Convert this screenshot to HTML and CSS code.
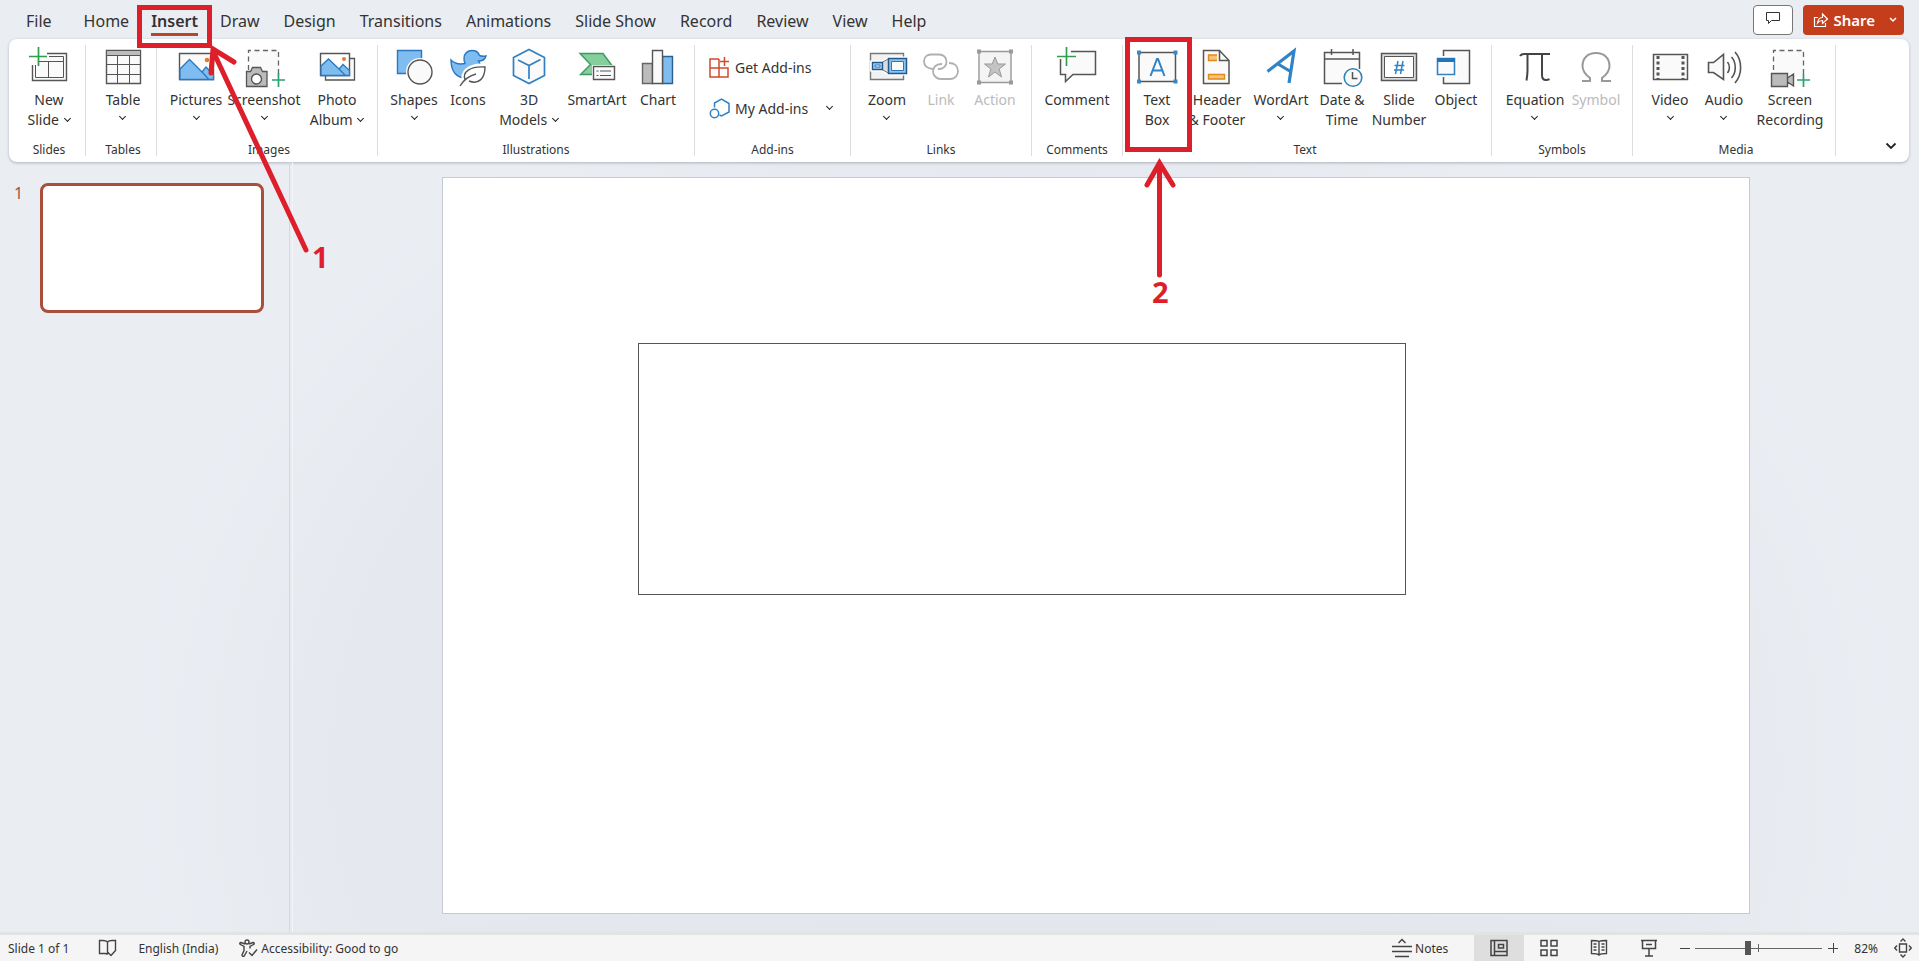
FILE: index.html
```
<!DOCTYPE html>
<html lang="en">
<head>
    <meta charset="UTF-8">
    <meta name="viewport" content="width=device-width, initial-scale=1.0">
    <title>Insert Text Box</title>
    <link rel="stylesheet" href="styles.css">
</head>
<body>
    <header class="tabs">
        <nav class="tab-list">
            <button class="tab tab-file">File</button>
            <button class="tab">Home</button>
            <button class="tab active">Insert</button>
            <button class="tab">Draw</button>
            <button class="tab">Design</button>
            <button class="tab">Transitions</button>
            <button class="tab">Animations</button>
            <button class="tab">Slide Show</button>
            <button class="tab">Record</button>
            <button class="tab">Review</button>
            <button class="tab">View</button>
            <button class="tab">Help</button>
        </nav>
        <button class="comments-btn" aria-label="Comments">
            <svg width="16" height="14" viewBox="0 0 16 14" fill="none" stroke="#333"><path d="M1.500 1.500h13v8h-8l-3 3v-3h-2z"/></svg>
        </button>
        <button class="share-btn">
            <svg width="16" height="16" viewBox="0 0 16 16" fill="none" stroke="#fff" stroke-width="1.200"><path d="M5 5.500H1.500v9h11V11M4.500 11c.5-4 2.500-5.500 5-5.500V2l5 5-5 4.500V8.500c-2 0-3.500.5-5 2.500z"/></svg>
            <span>Share</span>
            <svg class="share-chevron" width="8" height="6" viewBox="0 0 8 6" fill="none" stroke="#fff" stroke-width="1.500"><path d="M1 1l3 3 3-3"/></svg>
        </button>
    </header>

    <section class="ribbon">
        <div class="group roomy">
            <div class="tools">
                <button class="tool n">
                    <svg class="icon" viewBox="0 0 40 40" fill="none" stroke="#555"><path fill="#fafafa" stroke="none" d="M5 8h32v25H5z"/><path stroke-width="1.400" d="M18 6.500h19.500v27h-34V18"/><path d="M20 9.500h14.500v21h-28V18M10 14.500h24.500M19.500 14.500v16"/><path stroke="#2f9e4f" stroke-width="1.700" d="M9.500 0v19M0 9.500h18"/></svg>
                    <span>New<br>Slide <i class="chev"></i></span>
                </button>
            </div>
            <div class="group-name">Slides</div>
        </div>
        <div class="group roomy">
            <div class="tools">
                <button class="tool s">
                    <svg class="icon" viewBox="0 0 40 40" fill="none" stroke="#555"><path fill="#fafafa" stroke-width="1.400" d="M3.500 3.500h34v33h-34z"/><path fill="#bbb" d="M3.500 3.500h34v5h-34z"/><path d="M14.500 9v28M26.500 9v28M4 17.500h33M4 27.500h33"/></svg>
                    <span>Table<i class="chev below"></i></span>
                </button>
            </div>
            <div class="group-name">Tables</div>
        </div>
        <div class="group tight">
            <div class="tools">
                <button class="tool m">
                    <svg class="icon" viewBox="0 0 40 40" fill="none"><path fill="#fafafa" stroke="#555" stroke-width="1.400" d="M3.500 6.500h34v26h-34z"/><path fill="#7fbcf0" stroke="#2b78c0" stroke-width="1.300" d="M4 22l9.500-9.500L26 25l4-5 7.500 8v4.500H4zM26 25l6.500 7"/><circle cx="31" cy="13" r="2.300" fill="#e07b39"/></svg>
                    <span>Pictures<i class="chev below"></i></span>
                </button>
                <button class="tool m">
                    <svg class="icon" viewBox="0 0 40 40" fill="none"><path fill="#fafafa" d="M5 3h30v27H5z"/><path stroke="#666" stroke-width="1.300" stroke-dasharray="5 3.500" d="M4.500 23V3.500h30V28"/><path fill="#bbb" stroke="#555" stroke-width="1.300" d="M2.500 24.500h4l2-4h8l2 4h4.500v15H2.500z"/><circle cx="12.500" cy="32" r="5" fill="#fff" stroke="#555" stroke-width="1.400"/><path stroke="#2f9e6f" stroke-width="1.700" d="M34.500 26v14M28 33h13"/></svg>
                    <span>Screenshot<i class="chev below"></i></span>
                </button>
                <button class="tool l">
                    <svg class="icon" viewBox="0 0 40 40" fill="none"><path fill="#fafafa" stroke="#555" stroke-width="1.300" d="M33 11.500h4.500v21.500h-29v-4"/><path fill="#fff" stroke="#555" stroke-width="1.400" d="M3.500 6.500h29v22h-29z"/><path fill="#7fbcf0" stroke="#2b78c0" stroke-width="1.300" d="M4 19l7.500-7L22 22l4-4.500 6.500 6v5H4zM22 22l6 6"/><circle cx="27" cy="12" r="2" fill="#e07b39"/></svg>
                    <span>Photo<br>Album <i class="chev"></i></span>
                </button>
            </div>
            <div class="group-name">Images</div>
        </div>
        <div class="group wide">
            <div class="tools">
                <button class="tool s">
                    <svg class="icon" viewBox="0 0 40 40" fill="none"><path fill="#7fbcf0" stroke="#2b78c0" stroke-width="1.400" d="M3.500 3.500h24v23h-24z"/><circle cx="26" cy="25" r="14" fill="#fff"/><circle cx="26" cy="25" r="12" fill="#fafafa" stroke="#555" stroke-width="1.400"/></svg>
                    <span>Shapes<i class="chev below"></i></span>
                </button>
                <button class="tool s">
                    <svg class="icon" viewBox="0 0 40 40" fill="none"><path fill="#7fbcf0" stroke="#2b78c0" stroke-width="1.400" d="M3 13c4 4 9 4.500 14 3.500-1-2-1-3-1-5 0-5 3.500-8 8-8 4 0 6.500 2 7.500 5 2.500 1 4.500 1 6.500.5-1 3.500-4 5-7.500 5 2 3 3 7 1 11-3 5-9 6-14 6C9 31 3 25 3 13z"/><path fill="#fff" stroke="#fff" stroke-width="5" d="M17 35c-4-9 4-17 20-16 1 12-6 20-16 17z"/><path fill="#fff" stroke="#555" stroke-width="1.400" d="M17 33c-3-8 5-14 20-13 0 11-6 18-16 14M12 39c4-7 9-10 16-12"/></svg>
                    <span>Icons</span>
                </button>
                <button class="tool m">
                    <svg class="icon" viewBox="0 0 40 40" fill="none" stroke="#3080c4" stroke-width="1.700"><path fill="#fafafa" d="M20 2.500l15.500 8v18L20 36.500l-15.500-8v-18z"/><path d="M9 13l11 5.500 11.500-6M20 18.500V32"/></svg>
                    <span>3D<br>Models <i class="chev"></i></span>
                </button>
                <button class="tool m">
                    <svg class="icon" viewBox="0 0 40 40" fill="none"><path fill="#84cf9c" stroke="#3f9a62" stroke-width="1.400" d="M3 6.500h23l9 12v9H3.500l10-10z"/><path fill="#fff" stroke="#fff" stroke-width="3" d="M16.500 19.500h21v13h-21z"/><path fill="#fafafa" stroke="#555" stroke-width="1.400" d="M16.500 19.500h21v13h-21z"/><path stroke="#555" d="M19.500 24h2M23 24h11M19.500 28.500h2M23 28.500h11"/></svg>
                    <span>SmartArt</span>
                </button>
                <button class="tool s">
                    <svg class="icon" viewBox="0 0 40 40" stroke-width="1.400"><path fill="#bbb" stroke="#666" d="M4.500 16.500h10v20h-10z"/><path fill="#7fbcf0" stroke="#2b5f90" d="M24.500 9.500h10v27h-10z"/><path fill="#fafafa" stroke="#555" d="M14.500 3.500h10v33h-10z"/></svg>
                    <span>Chart</span>
                </button>
            </div>
            <div class="group-name">Illustrations</div>
        </div>
        <div class="group addins">
            <div class="tools rows">
                <button class="row-tool">
                    <svg width="21" height="21" viewBox="0 0 21 21" fill="none" stroke="#d04a2b" stroke-width="1.500"><path d="M10 2H1v18h18v-9H1M10 2v18M15.500 0v9M11 4.500h9"/></svg>
                    <span>Get Add-ins</span>
                </button>
                <button class="row-tool">
                    <svg width="21" height="21" viewBox="0 0 21 21" fill="none" stroke="#3080c4" stroke-width="1.500"><path d="M5.500 9.500V5L12.500 1l7.500 4.500v8.500L12.500 18l-2-1"/><circle cx="5.500" cy="15.500" r="4.200"/></svg>
                    <span>My Add-ins</span>
                    <i class="chev"></i>
                </button>
            </div>
            <div class="group-name">Add-ins</div>
        </div>
        <div class="group wide">
            <div class="tools">
                <button class="tool s">
                    <svg class="icon" viewBox="0 0 40 40" fill="none"><path fill="#f2f2f2" stroke="#777" stroke-width="1.400" d="M3.500 6.500h33v26h-33z"/><path fill="#fff" stroke="#fff" stroke-width="4" d="M5 15.500h11l6-4h17v15H22l-6-4H5z"/><path fill="#ddd" stroke="#777" d="M15 15.500l7-4v15l-7-4z"/><path fill="#9fd0f2" stroke="#24598a" stroke-width="1.400" d="M5.500 15.500h10v7h-10z"/><path fill="#fff" stroke="#2b78c0" d="M8 18h5v2H8z"/><path fill="#8cc6ee" stroke="#24598a" stroke-width="1.500" d="M21.500 11.500h18v15h-18z"/><path fill="#fafafa" stroke="#2b78c0" d="M24.500 14.500h12v9h-12z"/></svg>
                    <span>Zoom<i class="chev below"></i></span>
                </button>
                <button class="tool s" disabled>
                    <svg class="icon" viewBox="0 0 40 40" fill="none" stroke="#b0b0b0" stroke-width="1.800"><path d="M12 22c-5-.5-9-3-9-7.500C3 10 6 7.500 10 7.500h8c4.500 0 7.500 3 7.500 7 0 4.500-3 7.500-7 7.500H17M28 16c5.500 0 9 3 9 8 0 4.500-3 8-7.500 8H20c-4.500 0-8-3.500-8-7.500 0-4 3-7.500 8-7.500h1"/></svg>
                    <span>Link</span>
                </button>
                <button class="tool s" disabled>
                    <svg class="icon" viewBox="0 0 40 40"><path fill="#f4f4f4" stroke="#999" stroke-width="1.400" d="M4 4.500h32v31H4z"/><path fill="#999" d="M2 2.500h4v4H2zM34 2.500h4v4h-4zM2 33.500h4v4H2zM34 33.500h4v4h-4z"/><path fill="#c4c4c4" stroke="#999" d="M20 10l2.800 7h7.700l-6.300 5 2.300 8L20 25l-6.500 5 2.300-8-6.300-5h7.700z"/></svg>
                    <span>Action</span>
                </button>
            </div>
            <div class="group-name">Links</div>
        </div>
        <div class="group">
            <div class="tools">
                <button class="tool l">
                    <svg class="icon" viewBox="0 0 40 40" fill="none"><path fill="#fafafa" stroke="#555" stroke-width="1.500" d="M14 4.500h24.500v23H16l-7.500 7v-7h-5V12"/><path stroke="#fff" stroke-width="5" d="M9.500 0v19M0 9.500h19"/><path stroke="#2f9e4f" stroke-width="1.700" d="M9.500 0v19M0 9.500h19"/></svg>
                    <span>Comment</span>
                </button>
            </div>
            <div class="group-name">Comments</div>
        </div>
        <div class="group text-group">
            <div class="tools">
                <button class="tool n">
                    <svg class="icon" viewBox="0 0 40 40" fill="none"><path fill="#fafafa" stroke="#555" stroke-width="1.500" d="M2 5.500h36.500v29H2z"/><path fill="#3c88c4" d="M0 3.500h4v4H0zM36.500 3.500h4v4h-4zM0 32.500h4v4H0zM36.500 32.500h4v4h-4z"/><path stroke="#2f83c6" stroke-width="2" d="M13.500 29L20 12h1l6.500 17M15.500 23.500h10"/></svg>
                    <span>Text<br>Box</span>
                </button>
                <button class="tool n">
                    <svg class="icon" viewBox="0 0 40 40"><path fill="#fafafa" stroke="#555" stroke-width="1.500" d="M6.500 3.500h16l9.500 10v23H6.500z"/><path fill="none" stroke="#555" stroke-width="1.500" d="M22.500 3.500v10H32"/><path fill="#f8c471" stroke="#dd8a20" stroke-width="1.400" d="M20 8h-8.500v5.500H20M11.500 27.500h16v4.500h-16z"/></svg>
                    <span>Header<br>&amp; Footer</span>
                </button>
                <button class="tool m">
                    <svg class="icon" viewBox="0 0 40 40" fill="none" stroke="#2f83c6" stroke-width="3.200"><path d="M6.500 24.500L33 4l-5 32M17 17l12.500 7.500"/></svg>
                    <span>WordArt<i class="chev below"></i></span>
                </button>
                <button class="tool s">
                    <svg class="icon" viewBox="0 0 40 40" fill="none"><path fill="#fafafa" stroke="#555" stroke-width="1.500" d="M20 36.500H2.500v-31h35V22M2.500 12h35"/><path stroke="#555" stroke-width="1.500" d="M9.500 2v6M31 2v6"/><circle cx="31" cy="30.500" r="10.500" fill="#fff"/><circle cx="31" cy="30.500" r="8.800" fill="#fafafa" stroke="#2f83b6" stroke-width="1.600"/><path stroke="#555" stroke-width="1.500" d="M30.500 25v6.500h5"/></svg>
                    <span>Date &amp;<br>Time</span>
                </button>
                <button class="tool n">
                    <svg class="icon" viewBox="0 0 40 40" fill="none" stroke="#555"><path fill="#ddd" stroke-width="1.500" d="M2.500 6.500h35v27h-35z"/><path fill="#fff" d="M5.500 9.500h29v21h-29z"/><path stroke="#2f83c6" stroke-width="1.500" d="M19 14l-2.500 13M24 14l-2.500 13M15.500 18.500h10M15 23h10"/></svg>
                    <span>Slide<br>Number</span>
                </button>
                <button class="tool s">
                    <svg class="icon" viewBox="0 0 40 40"><path fill="#fafafa" stroke="#555" stroke-width="1.500" d="M7.500 3.500h26v33h-26z"/><path fill="#fff" d="M0 9h21v21H0z"/><path fill="#fafafa" stroke="#2f83c6" stroke-width="1.600" d="M1.500 11.500h17v16h-17z"/><path fill="#2375bb" d="M1 11h18v4H1z"/></svg>
                    <span>Object</span>
                </button>
            </div>
            <div class="group-name">Text</div>
        </div>
        <div class="group wide">
            <div class="tools">
                <button class="tool m">
                    <svg class="icon" viewBox="0 0 40 40" fill="none" stroke="#444" stroke-width="2"><path d="M5 9c1-1.500 2-2 4-2h26M12.500 7.500v16c0 4-.5 7-1 10M27 7.500V28c0 3.500 1.500 5 4 5 1.500 0 2.500-.3 3.500-.8"/></svg>
                    <span>Equation<i class="chev below"></i></span>
                </button>
                <button class="tool s" disabled>
                    <svg class="icon" viewBox="0 0 40 40" fill="none" stroke="#999" stroke-width="2"><path d="M6 34h8v-3c-4-3-7.500-6-7.500-12C6.500 11 12 6 20 6s13.500 5 13.500 13c0 6-3.500 9-7.500 12v3h9"/></svg>
                    <span>Symbol</span>
                </button>
            </div>
            <div class="group-name">Symbols</div>
        </div>
        <div class="group roomy">
            <div class="tools">
                <button class="tool s">
                    <svg class="icon" viewBox="0 0 40 40" fill="none"><path fill="#fafafa" stroke="#555" stroke-width="1.500" d="M3.500 7.500h34v25h-34z"/><path stroke="#555" stroke-width="3" stroke-dasharray="3 2.500" d="M8 9v23M33 9v23"/></svg>
                    <span>Video<i class="chev below"></i></span>
                </button>
                <button class="tool s">
                    <svg class="icon" viewBox="0 0 40 40" fill="none" stroke="#555" stroke-width="1.600"><path fill="#fafafa" d="M4.500 15.500h5L19.500 7.500v25L9.500 25.500h-5z"/><path d="M23.500 15c2.500 3 2.500 8 0 11M27.500 10c5 5.500 5 15.500 0 21M31 5c7.500 8.500 7.500 22.500 0 31"/></svg>
                    <span>Audio<i class="chev below"></i></span>
                </button>
                <button class="tool l">
                    <svg class="icon" viewBox="0 0 40 40" fill="none"><path fill="#fafafa" d="M4 3h29v27H4z"/><path stroke="#666" stroke-width="1.300" stroke-dasharray="5 3.500" d="M3.500 23V3.500h30V28"/><path fill="#bbb" stroke="#555" stroke-width="1.400" d="M1.500 26.500h16v13h-16zM17.500 31l6-4v12l-6-4z"/><path stroke="#2f9e6f" stroke-width="1.700" d="M33.500 27v13M27 33h13"/></svg>
                    <span>Screen<br>Recording</span>
                </button>
            </div>
            <div class="group-name">Media</div>
        </div>
        <button class="collapse" aria-label="Collapse ribbon">
            <svg width="12" height="8" viewBox="0 0 12 8" fill="none" stroke="#222" stroke-width="1.800"><path d="M1.500 1.500L6 6l4.500-4.500"/></svg>
        </button>
    </section>

    <main class="workspace">
        <aside class="thumbs">
            <span class="thumb-number">1</span>
            <button class="thumb" aria-label="Slide 1"></button>
        </aside>
        <div class="editor">
            <div class="slide">
                <textarea class="slide-textbox" aria-label="Text box"></textarea>
            </div>
        </div>
    </main>

    <footer class="status">
        <span class="slide-count">Slide 1 of 1</span>
        <button class="status-btn proof" aria-label="Proofing">
            <svg width="19" height="18" viewBox="0 0 19 18" fill="none" stroke="#444" stroke-width="1.400"><path d="M9.500 3v12.500M9.500 3C8.500 1.800 7 1.500 5 1.500H1.500v13H7c1 0 2 .3 2.500 1M9.500 3c1-1.200 2.500-1.500 4.500-1.500h3.500V12M9.500 13l3.500 3.500 4.500-5"/></svg>
        </button>
        <button class="status-btn language">English (India)</button>
        <button class="status-btn">
            <svg width="19" height="19" viewBox="0 0 19 19" fill="none" stroke="#444" stroke-width="1.400"><circle cx="8" cy="3" r="2"/><path d="M6 5L2 3.500C.5 3.500.5 5 1.500 5.500L5 7.500v4L3 16c0 1.500 1.500 2 2.500.5L8 12M10 5l4-1.500c1.500 0 1.500 1.500.5 2L11 7.500v2M10 13.500l3 3 5-6"/></svg>
            <span>Accessibility: Good to go</span>
        </button>
        <div class="status-right">
            <button class="status-btn notes">
                <svg width="20" height="20" viewBox="0 0 20 20" fill="none" stroke="#444" stroke-width="1.500"><path d="M6.500 5L10 1.500 13.500 5M0 8.500h20M0 13.500h20M3 18.500h14"/></svg>
                <span>Notes</span>
            </button>
            <button class="view-btn on" aria-label="Normal">
                <svg width="18" height="18" viewBox="0 0 18 18" fill="none" stroke="#444" stroke-width="1.500"><path d="M1 1.500h16v15H1zM4.500 1.500v15M4.500 12.500H17M8.500 5.500h5v3.500h-5z"/></svg>
            </button>
            <button class="view-btn" aria-label="Slide Sorter">
                <svg width="18" height="18" viewBox="0 0 18 18" fill="none" stroke="#444" stroke-width="1.500"><path d="M1 1.500h6v5.500H1zM11 1.500h6v5.500h-6zM1 11h6v5.500H1zM11 11h6v5.500h-6z"/></svg>
            </button>
            <button class="view-btn" aria-label="Reading View">
                <svg width="18" height="18" viewBox="0 0 18 18" fill="none" stroke="#444" stroke-width="1.400"><path d="M9 2.500C7.500 1.500 4 1.500 1.500 1.500v13c2.500 0 6 0 7.500 1.500 1.500-1.500 5-1.500 7.500-1.500v-13c-2.500 0-6 0-7.500 1zV16M3.500 5h3M3.500 8h3M3.500 11h3M11.500 5h3M11.500 8h3M11.500 11h3"/></svg>
            </button>
            <button class="view-btn" aria-label="Slide Show">
                <svg width="18" height="18" viewBox="0 0 18 18" fill="none" stroke="#444" stroke-width="1.500"><path d="M1 1.500h16M2.500 1.500v8h13v-8M6 5.500h6M9 9.500v7M5 17h8"/></svg>
            </button>
            <button class="zoom-step" aria-label="Zoom out">
                <svg width="10" height="10" viewBox="0 0 10 10" stroke="#444"><path d="M0 5.500h10"/></svg>
            </button>
            <input class="zoom-slider" type="range" min="10" max="154" value="69" aria-label="Zoom">
            <button class="zoom-step" aria-label="Zoom in">
                <svg width="10" height="10" viewBox="0 0 10 10" stroke="#444"><path d="M0 5.500h10M5.500 0v10"/></svg>
            </button>
            <button class="status-btn percent">82%</button>
            <button class="status-btn fit" aria-label="Fit slide to window">
                <svg width="18" height="20" viewBox="0 0 18 20" fill="none" stroke="#444" stroke-width="1.400"><path d="M5.500 6h7v8h-7zM6.500 3.500L9 1l2.500 2.500M6.500 16.500L9 19l2.500-2.500M3 7.500L.8 10 3 12.500M15 7.500l2.200 2.500-2.200 2.500"/></svg>
            </button>
        </div>
    </footer>

    <!-- step markers -->
    <svg class="steps" width="1200" height="320" viewBox="0 0 1200 320">
        <path d="M139.500 7.500h70v38h-70zM1127.500 39.500h62v110h-62z"/>
        <path class="arrow" d="M306 250L213 51M211 73l2-24 21 13M1159.500 275V164M1147 185l12.500-22 13.500 22"/>
        <text x="312" y="268">1</text>
        <text x="1152" y="303">2</text>
    </svg>
</body>
</html>
```
FILE: styles.css
```
* {
    box-sizing: border-box;
}
body {
    margin: 0;
    min-height: 100vh;
    display: flex;
    flex-direction: column;
    position: relative;
    font-family: "Noto Sans", "Open Sans", sans-serif;
    font-size: 14px;
    color: #333;
    background: radial-gradient(ellipse 46% 76% at 53% 80%, #e4e6ed 0%, #e5e8ee 75%, #eaedf2 100%);
}
button {
    font: inherit;
    color: inherit;
    background: none;
    border: 0;
    padding: 0;
    margin: 0;
}

/* tab strip */
.tabs {
    display: flex;
    align-items: center;
    height: 39px;
    padding: 0 15px 0 26px;
}
.tab-list {
    display: flex;
    gap: 24px;
    flex: 1;
    font-size: 16px;
}
.tab {
    line-height: 24px;
    padding: 6px 0 0;
    border-bottom: 3px solid transparent;
}
.tab-file {
    margin-right: 8px;
}
.tab.active {
    margin: 0 -2px;
    font-weight: 600;
    border-bottom-color: #b7472a;
}
.comments-btn {
    width: 40px;
    height: 30px;
    background: #fff;
    border: 1px solid #777;
    border-radius: 4px;
    margin-right: 10px;
}
.share-btn {
    display: flex;
    align-items: center;
    gap: 4px;
    height: 30px;
    padding: 0 7px 0 10px;
    background: #c43e1c;
    color: #fff;
    font-size: 15px;
    font-weight: 600;
    border-radius: 4px;
}
.share-chevron {
    margin-left: 10px;
}

/* ribbon */
.ribbon {
    display: flex;
    margin: 0 10px 0 9px;
    padding: 6px 0;
    background: #fff;
    border-radius: 8px;
    box-shadow: 0 1px 3px rgba(60, 70, 90, 0.35);
}
.group {
    display: flex;
    flex-direction: column;
    align-items: center;
    justify-content: space-between;
    height: 111px;
    padding: 2px 6px 0;
    border-right: 1px solid #ddd;
}
.roomy {
    padding-left: 10px;
    padding-right: 6px;
}
.wide {
    padding-left: 9px;
    padding-right: 9px;
}
.tight {
    padding-left: 5px;
    padding-right: 1px;
}
.text-group {
    padding-left: 4px;
    padding-right: 8px;
}
.tools {
    display: flex;
    align-items: flex-start;
}
.tool {
    display: flex;
    flex-direction: column;
    align-items: center;
    line-height: 20px;
    white-space: nowrap;
}
.tool:disabled {
    color: #bbb;
}
.s {
    width: 54px;
}
.n {
    width: 60px;
}
.m {
    width: 68px;
}
.l {
    width: 78px;
}
.icon {
    width: 40px;
    height: 40px;
    margin-bottom: 3px;
    overflow: visible;
}
.chev {
    display: inline-block;
    width: 5px;
    height: 5px;
    margin: 0 1px 4px 2px;
    border: solid #222;
    border-width: 0 1px 1px 0;
    transform: rotate(45deg);
}
.chev.below {
    display: block;
    margin: 4px auto 0;
}
.group-name {
    font-size: 12px;
    line-height: 12px;
}
.addins {
    width: 156px;
    align-items: stretch;
    padding: 2px 14px 0;
    text-align: center;
}
.rows {
    flex-direction: column;
    padding-top: 10px;
    gap: 20px;
}
.row-tool {
    display: flex;
    align-items: center;
    gap: 5px;
    line-height: 20px;
    white-space: nowrap;
}
.row-tool .chev {
    margin-left: 14px;
}
.collapse {
    align-self: flex-end;
    margin: 0 12px 2px auto;
}

/* slide area */
.workspace {
    display: flex;
    flex: 1;
}
.thumbs {
    display: flex;
    align-items: flex-start;
    width: 290px;
    padding: 21px 25px 0 14px;
    border-right: 1px solid #d6dae0;
}
.thumb-number {
    width: 26px;
    color: #a5523f;
    font-size: 16px;
    line-height: 20px;
}
.thumb {
    flex: 1;
    aspect-ratio: 224 / 130;
    background: #fff;
    border: 3px solid #a9503c;
    border-radius: 8px;
}
.editor {
    flex: 1;
    display: flex;
    padding: 15px 169px 18px 149px;
    margin-left: 2px;
    border-left: 1px solid #f2f4f7;
}
.slide {
    flex: 1;
    position: relative;
    background: #fff;
    border: 1px solid #c6cad2;
}
.slide-textbox {
    position: absolute;
    left: 14.9%;
    top: 22.5%;
    width: 58.8%;
    height: 34.3%;
    resize: none;
    background: #fff;
    border: 1px solid #555;
}

/* status bar */
.status {
    display: flex;
    align-items: center;
    height: 29px;
    padding-left: 8px;
    background: #f5f5f5;
    border-top: 3px solid #e3e3e5;
    font-size: 12px;
}
.slide-count {
    margin-right: 29px;
}
.status-btn {
    display: flex;
    align-items: center;
    gap: 3px;
}
.proof, .language {
    margin-right: 21px;
}
.status-right {
    display: flex;
    align-items: center;
    align-self: stretch;
    margin-left: auto;
    padding-right: 7px;
}
.notes {
    margin-right: 26px;
}
.view-btn {
    display: flex;
    align-items: center;
    justify-content: center;
    width: 50px;
    align-self: stretch;
}
.view-btn.on {
    background: #dedede;
}
.zoom-step {
    display: flex;
    margin: 0 5px 0 6px;
}
.zoom-slider {
    appearance: none;
    width: 127px;
    height: 14px;
    margin: 0;
    background:
        linear-gradient(#666, #666) 50% 50% / 1px 8px no-repeat,
        linear-gradient(#666, #666) 0 50% / 100% 1px no-repeat;
}
.zoom-slider::-webkit-slider-thumb {
    appearance: none;
    width: 6px;
    height: 14px;
    background: #555;
}
.percent {
    margin: 0 16px 0 11px;
}

/* numbered arrows over the page */
.steps {
    position: absolute;
    left: 0;
    top: 0;
    fill: none;
    stroke: #dd1f2b;
    stroke-width: 5px;
    pointer-events: none;
}
.steps .arrow {
    stroke-linecap: round;
}
.steps text {
    fill: #dd1f2b;
    stroke: none;
    font-size: 29px;
    font-weight: 700;
}
```
